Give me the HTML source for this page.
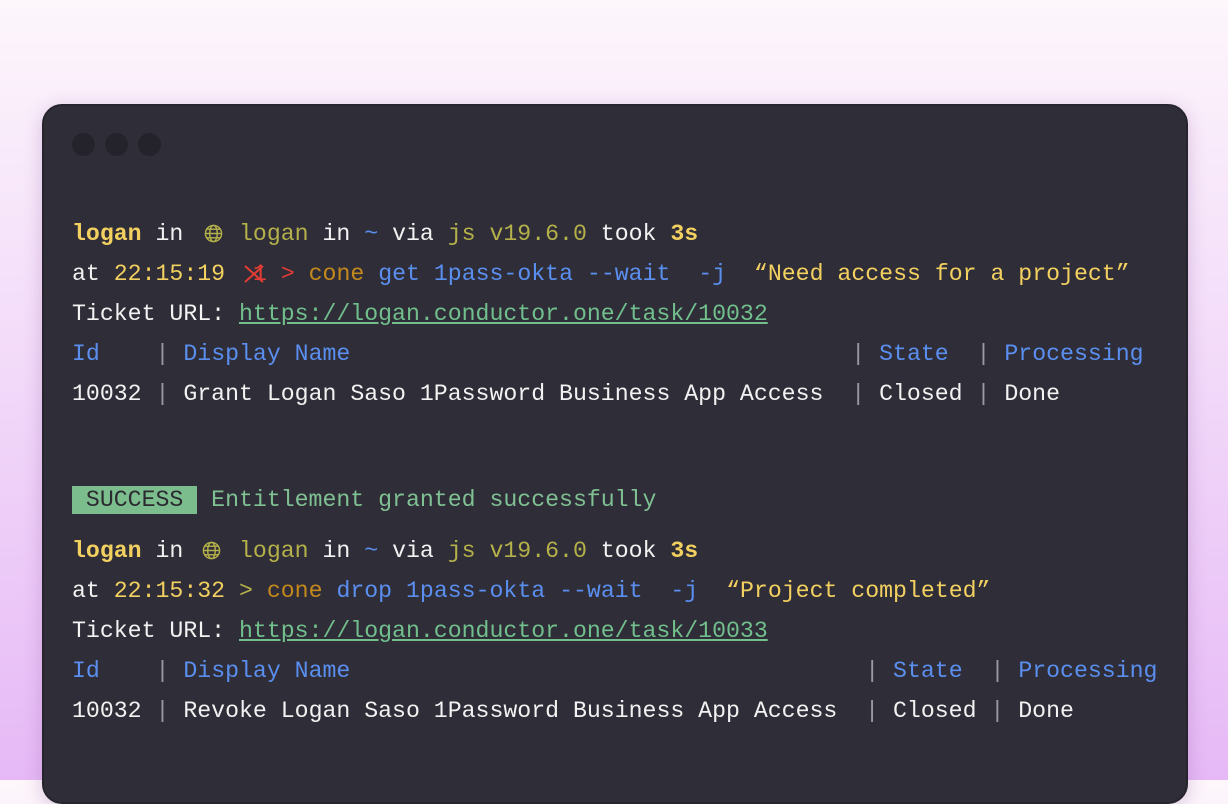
<!DOCTYPE html>
<html><head><meta charset="utf-8"><style>
html,body{margin:0;padding:0;}
body{width:1228px;height:780px;overflow:hidden;position:relative;background:linear-gradient(180deg,#fdf6fb 0%,#f6e4fa 30%,#e6b9f6 100%);}
.win{position:absolute;left:42px;top:104px;width:1146px;height:700px;background:#2f2d37;border-radius:20px;border:2px solid #26242c;box-sizing:border-box;box-shadow:0 4px 18px rgba(120,60,140,.25);}
.dot{position:absolute;top:133px;width:23px;height:23px;border-radius:50%;background:#24222a;}
.l{position:absolute;left:72px;height:40px;line-height:40px;font-family:"Liberation Mono",monospace;font-size:23.2px;color:#f2f2f2;white-space:pre;}
.y{color:#f3d160;font-weight:bold}
.yn{color:#f3d160}
.o{color:#b4b04a}
.b{color:#5a8ff0}
.c{color:#c4891c}
.r{color:#e23c35}
.g{color:#71bf8c;text-decoration:underline}
.gt{color:#7fc193}
.p{color:#9a98a0}
.s{background:#7cbd8d;color:#2b2a31;display:inline-block;line-height:28px;}
.globe{position:absolute;}
</style></head><body>
<div class="win"></div>
<div class="dot" style="left:72px"></div>
<div class="dot" style="left:105px"></div>
<div class="dot" style="left:138px"></div>

<div class="l" style="top:214px"><span class="y">logan</span> in    <span class="o">logan</span> in <span class="b">~</span> via <span class="o">js v19.6.0</span> took <span class="y">3s</span></div>
<svg class="globe" style="left:204px;top:224px" width="19" height="19" viewBox="0 0 20 20" fill="none" stroke="#b4b04a" stroke-width="1.5"><circle cx="10" cy="10" r="8.5"/><ellipse cx="10" cy="10" rx="4" ry="8.5"/><line x1="1.5" y1="10" x2="18.5" y2="10"/><line x1="3" y1="5.5" x2="17" y2="5.5"/><line x1="3" y1="14.5" x2="17" y2="14.5"/></svg>
<div class="l" style="top:254px">at <span class="yn">22:15:19</span>  <span class="r">1</span> <span class="r">&gt;</span> <span class="c">cone</span> <span class="b">get 1pass-okta --wait  -j</span>  <span class="yn">“Need access for a project”</span></div>
<svg class="globe" style="left:244px;top:265px" width="20" height="18" viewBox="0 0 20 18" fill="none" stroke="#e23c35" stroke-width="2"><line x1="1" y1="1" x2="19" y2="17"/><line x1="19" y1="1" x2="1" y2="17"/></svg>
<div class="l" style="top:294px">Ticket URL: <span class="g">https://logan.conductor.one/task/10032</span></div>
<div class="l" style="top:334px"><span class="b">Id</span>    <span class="p">|</span> <span class="b">Display Name</span>                                    <span class="p">|</span> <span class="b">State</span>  <span class="p">|</span> <span class="b">Processing</span></div>
<div class="l" style="top:374px">10032 <span class="p">|</span> Grant Logan Saso 1Password Business App Access  <span class="p">|</span> Closed <span class="p">|</span> Done</div>

<div class="l" style="top:480px"><span class="s"> SUCCESS </span> <span class="gt">Entitlement granted successfully</span></div>
<div class="l" style="top:531px"><span class="y">logan</span> in    <span class="o">logan</span> in <span class="b">~</span> via <span class="o">js v19.6.0</span> took <span class="y">3s</span></div>
<svg class="globe" style="left:202px;top:541px" width="19" height="19" viewBox="0 0 20 20" fill="none" stroke="#b4b04a" stroke-width="1.5"><circle cx="10" cy="10" r="8.5"/><ellipse cx="10" cy="10" rx="4" ry="8.5"/><line x1="1.5" y1="10" x2="18.5" y2="10"/><line x1="3" y1="5.5" x2="17" y2="5.5"/><line x1="3" y1="14.5" x2="17" y2="14.5"/></svg>
<div class="l" style="top:571px">at <span class="yn">22:15:32</span> <span class="o">&gt;</span> <span class="c">cone</span> <span class="b">drop 1pass-okta --wait  -j</span>  <span class="yn">“Project completed”</span></div>
<div class="l" style="top:611px">Ticket URL: <span class="g">https://logan.conductor.one/task/10033</span></div>
<div class="l" style="top:651px"><span class="b">Id</span>    <span class="p">|</span> <span class="b">Display Name</span>                                     <span class="p">|</span> <span class="b">State</span>  <span class="p">|</span> <span class="b">Processing</span></div>
<div class="l" style="top:691px">10032 <span class="p">|</span> Revoke Logan Saso 1Password Business App Access  <span class="p">|</span> Closed <span class="p">|</span> Done</div>
</body></html>
